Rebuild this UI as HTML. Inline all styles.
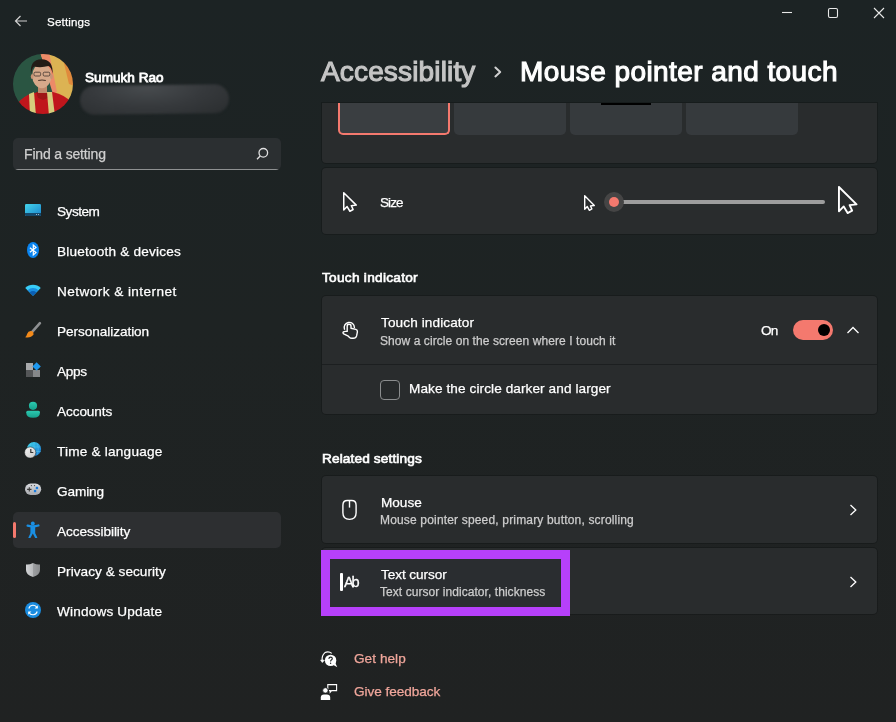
<!DOCTYPE html>
<html><head><meta charset="utf-8"><style>
html,body{margin:0;padding:0;}
body{width:896px;height:722px;overflow:hidden;position:relative;background:linear-gradient(180deg,#1c2324 0%,#1e2323 45%,#202222 100%);font-family:"Liberation Sans",sans-serif;}
.t{position:absolute;white-space:nowrap;line-height:1;will-change:transform;}
svg{will-change:transform;}
</style></head><body>
<svg style="position:absolute;left:0;top:0" width="896" height="40"><g fill="none" stroke="#d0d0d0" stroke-width="1.2"><path d="M15.5 21H27M20.5 16L15.5 21L20.5 26"/></g><g fill="none" stroke="#e8e8e8" stroke-width="1.1"><path d="M782 12.5H792"/><rect x="828.5" y="8.5" width="9" height="9" rx="1.5"/><path d="M874 8L884 18M884 8L874 18"/></g></svg>
<div class="t" style="left:47.12px;top:16.18px;font-size:11.6px;color:#ffffff;letter-spacing:0.159px;-webkit-text-stroke:0.25px #ffffff;">Settings</div>
<svg style="position:absolute;left:13px;top:54px" width="60" height="60" viewBox="0 0 60 60">
<defs><clipPath id="cc"><circle cx="30" cy="30" r="30"/></clipPath>
<filter id="bl"><feGaussianBlur stdDeviation="0.7"/></filter></defs>
<g clip-path="url(#cc)" filter="url(#bl)">
<rect x="-2" y="-2" width="64" height="64" fill="#2b5542"/>
<path d="M27 -2L62 -2L62 62L46 62L41 38Z" fill="#dcb352"/>
<path d="M27 -2L36 -2L44 38L40 40Z" fill="#ec8a68"/>
<path d="M50 5L58 14L62 32L56 30Z" fill="#e08a3c"/>
<path d="M4 50Q10 42 20 39L40 38Q52 41 58 48L62 62L-2 62Z" fill="#c0191f"/>
<path d="M23 38L37 38L35 44L30 46L25 44Z" fill="#9e1418"/>
<path d="M16 40L21 38L23 62L17 62Z" fill="#d6cc7c"/>
<path d="M34 38L39 38L42 62L36 62Z" fill="#d6cc7c"/>
<rect x="25" y="29" width="9" height="10" fill="#c08a6c"/>
<ellipse cx="28.8" cy="21.8" rx="9.6" ry="12.4" fill="#d6a98a"/>
<ellipse cx="19.2" cy="22.5" rx="1.4" ry="2.6" fill="#c89474"/>
<ellipse cx="38.4" cy="22.5" rx="1.4" ry="2.6" fill="#c89474"/>
<path d="M18 20Q16.5 5.5 28.5 5.2Q40.5 5.5 39.5 20Q38.5 13 35.5 12Q28 14 21 12.5Q18.8 14.5 18 20Z" fill="#231a15"/>
<rect x="21" y="18.2" width="6.6" height="3.8" rx="1.2" fill="none" stroke="#3f332e" stroke-width="0.8"/>
<rect x="30.2" y="18.2" width="6.6" height="3.8" rx="1.2" fill="none" stroke="#3f332e" stroke-width="0.8"/>
<path d="M25.2 26.6Q29 25.4 32.8 26.6" stroke="#4a352a" stroke-width="1.1" fill="none"/>
</g></svg>
<div class="t" style="left:85.40px;top:71.19px;font-size:13.6px;color:#ffffff;letter-spacing:0.010px;-webkit-text-stroke:0.8px #ffffff;">Sumukh Rao</div>
<div style="position:absolute;left:80px;top:85px;width:149px;height:29px;border-radius:14.5px;background:radial-gradient(ellipse 70% 120% at 45% 10%,#474b4e,#36393c 55%,#2c2f31 100%);filter:blur(1.2px);transform:rotate(-0.7deg)"></div>
<div style="position:absolute;left:13px;top:138px;width:268px;height:32px;border-radius:5px;background:#2b2f31;overflow:hidden"><div style="position:absolute;left:0;right:0;bottom:0;height:1px;background:#8f9192"></div></div>
<div class="t" style="left:24.12px;top:147.45px;font-size:14px;color:#cfcfcf;letter-spacing:-0.163px;-webkit-text-stroke:0.25px #cfcfcf;">Find a setting</div>
<svg style="position:absolute;left:250px;top:144px" width="24" height="24"><g fill="none" stroke="#e0e0e0" stroke-width="1.3"><circle cx="13.3" cy="8.8" r="4.3"/><path d="M10.2 12L7 15.2"/></g></svg>
<div style="position:absolute;left:13px;top:512px;width:268px;height:36px;border-radius:5px;background:#2d2f31"></div>
<div style="position:absolute;left:13px;top:522px;width:3px;height:16px;border-radius:2px;background:#f4796e"></div>
<div class="t" style="left:57.42px;top:204.99px;font-size:13.6px;color:#ffffff;letter-spacing:-0.481px;-webkit-text-stroke:0.25px #ffffff;">System</div>
<div class="t" style="left:57.42px;top:244.99px;font-size:13.6px;color:#ffffff;letter-spacing:0.196px;-webkit-text-stroke:0.25px #ffffff;">Bluetooth &amp; devices</div>
<div class="t" style="left:57.42px;top:284.99px;font-size:13.6px;color:#ffffff;letter-spacing:0.441px;-webkit-text-stroke:0.25px #ffffff;">Network &amp; internet</div>
<div class="t" style="left:57.42px;top:324.99px;font-size:13.6px;color:#ffffff;letter-spacing:-0.055px;-webkit-text-stroke:0.25px #ffffff;">Personalization</div>
<div class="t" style="left:57.42px;top:364.99px;font-size:13.6px;color:#ffffff;letter-spacing:-0.286px;-webkit-text-stroke:0.25px #ffffff;">Apps</div>
<div class="t" style="left:57.42px;top:404.99px;font-size:13.6px;color:#ffffff;letter-spacing:-0.088px;-webkit-text-stroke:0.25px #ffffff;">Accounts</div>
<div class="t" style="left:57.42px;top:444.99px;font-size:13.6px;color:#ffffff;letter-spacing:0.215px;-webkit-text-stroke:0.25px #ffffff;">Time &amp; language</div>
<div class="t" style="left:57.42px;top:484.99px;font-size:13.6px;color:#ffffff;letter-spacing:-0.110px;-webkit-text-stroke:0.25px #ffffff;">Gaming</div>
<div class="t" style="left:57.42px;top:524.99px;font-size:13.6px;color:#ffffff;letter-spacing:-0.058px;-webkit-text-stroke:0.25px #ffffff;">Accessibility</div>
<div class="t" style="left:57.42px;top:564.99px;font-size:13.6px;color:#ffffff;letter-spacing:0.041px;-webkit-text-stroke:0.25px #ffffff;">Privacy &amp; security</div>
<div class="t" style="left:57.42px;top:604.99px;font-size:13.6px;color:#ffffff;letter-spacing:0.172px;-webkit-text-stroke:0.25px #ffffff;">Windows Update</div>
<svg style="position:absolute;left:0;top:190px" width="60" height="440">
<defs>
<linearGradient id="sys" x1="0" y1="0" x2="1" y2="1"><stop offset="0" stop-color="#44d4ea"/><stop offset="1" stop-color="#1a84cc"/></linearGradient>
<linearGradient id="wifi" x1="0" y1="0" x2="0" y2="1"><stop offset="0" stop-color="#3ac8f4"/><stop offset="1" stop-color="#0b5fb8"/></linearGradient>
<linearGradient id="acc" x1="0" y1="0" x2="0" y2="1"><stop offset="0" stop-color="#2cc9b0"/><stop offset="1" stop-color="#16a08c"/></linearGradient>
<linearGradient id="shield" x1="0" y1="0" x2="1" y2="0"><stop offset="0" stop-color="#d2d4d6"/><stop offset="0.5" stop-color="#b8babc"/><stop offset="0.5" stop-color="#9ea0a2"/><stop offset="1" stop-color="#8a8c8e"/></linearGradient>
<linearGradient id="globe" x1="0" y1="0" x2="1" y2="1"><stop offset="0" stop-color="#40d8ec"/><stop offset="1" stop-color="#1470d0"/></linearGradient>
<linearGradient id="clock" x1="0" y1="0" x2="1" y2="1"><stop offset="0" stop-color="#f4f4f4"/><stop offset="1" stop-color="#c8c8c8"/></linearGradient>
<linearGradient id="pad" x1="0" y1="0" x2="0" y2="1"><stop offset="0" stop-color="#d8dade"/><stop offset="1" stop-color="#a8aaae"/></linearGradient>
</defs>
<!-- System y 204-216 -->
<rect x="25" y="14" width="16" height="12" rx="1.2" fill="url(#sys)"/>
<path d="M25 23H41V24.8Q41 26 39.8 26H26.2Q25 26 25 24.8Z" fill="#16486a"/>
<circle cx="36.5" cy="24.5" r="0.55" fill="#b8c8d8"/><circle cx="38.5" cy="24.5" r="0.55" fill="#b8c8d8"/>
<!-- Bluetooth 242-258 -->
<ellipse cx="33" cy="60" rx="6" ry="8" fill="#0a84f0"/>
<path d="M29.9 57.7L36 62.6L33.3 64.9V55.1L36 57.4L29.9 62.3" fill="none" stroke="#fff" stroke-width="1.2" stroke-linejoin="miter"/>
<!-- Wifi 285-296 -->
<path d="M33 105.8L25.22 98.02A11 11 0 0 1 40.78 98.02Z" fill="#38cdf8"/><path d="M33 105.8L27.56 100.36A7.7 7.7 0 0 1 38.44 100.36Z" fill="#1a8fe2"/><path d="M33 105.8L29.61 102.41A4.8 4.8 0 0 1 36.39 102.41Z" fill="#0b5fb5"/>
<!-- Brush 322-338 -->
<path d="M39.9 133.2L32.4 141.6" stroke="#8e9092" stroke-width="2.6" stroke-linecap="round"/>
<path d="M33 141.4Q28.4 139.8 27.2 143.8Q26.6 146.2 25.2 147.2Q30.8 148.2 33.6 144.4Z" fill="#f38a1a"/>
<!-- Apps 362-377 -->
<rect x="26" y="173" width="7" height="7" fill="#a8aaac"/>
<rect x="26" y="180" width="7" height="7" fill="#545658"/>
<rect x="33" y="180" width="7" height="7" fill="#86888a"/>
<path d="M36.6 172.2L40.8 176.4L36.6 180.6L32.4 176.4Z" fill="#1e98ee"/>
<!-- Accounts 402-418 -->
<circle cx="33" cy="215.8" r="4.1" fill="url(#acc)"/>
<path d="M26.2 222.3Q26.2 220.8 27.7 220.8H38.5Q40 220.8 40 222.3Q40 227.8 33.1 227.8Q26.2 227.8 26.2 222.3Z" fill="url(#acc)"/>
<!-- Time 442-458 -->
<circle cx="34" cy="259" r="7.1" fill="url(#globe)"/>
<path d="M27.5 257H40.5M27.5 261.5H40.8M34 252V266M30.5 253.5Q29 259 30.5 264.5M37.5 253.5Q39 259 37.5 264.5" stroke="#5fd0f0" stroke-width="0.6" fill="none" opacity="0.7"/>
<circle cx="30.2" cy="262.5" r="5.6" fill="url(#clock)" stroke="#1e2223" stroke-width="0.5"/>
<path d="M30.8 258.9V262.5H33.3" fill="none" stroke="#333" stroke-width="1.2"/>
<!-- Gaming 484-495 -->
<rect x="25" y="293.6" width="16.2" height="11.4" rx="5.7" fill="url(#pad)"/>
<circle cx="31.4" cy="295.6" r="0.65" fill="#444"/><circle cx="34.5" cy="295.6" r="0.65" fill="#444"/>
<path d="M27.1 299.4H31.5M29.3 297.2V301.6" stroke="#3a3a3a" stroke-width="1.1"/>
<rect x="35.8" y="296.8" width="2.3" height="2.3" fill="#1a7de0"/>
<rect x="33.9" y="299.9" width="2.3" height="2.3" fill="#1a7de0"/>
<!-- Accessibility 522-538 -->
<circle cx="32.8" cy="333.4" r="1.95" fill="#1a8fe3"/>
<path d="M27.6 335.6Q33 337.2 38.4 335.5" fill="none" stroke="#1a8fe3" stroke-width="2.3" stroke-linecap="round"/>
<path d="M30.4 336.4H35.2V343.2L37.3 347.4Q37.3 348 36.6 348H35.6Q35.1 348 34.9 347.4L32.8 343.6L30.7 347.4Q30.5 348 30 348H29Q28.3 348 28.4 347.4L30.4 343.2Z" fill="#1a8fe3"/>
<!-- Privacy 563-577 -->
<path d="M33 373Q29 375 26 374.5V380Q26 385 33 387Q40 385 40 380V374.5Q37 375 33 373Z" fill="url(#shield)"/>
<!-- Update 602-618 -->
<circle cx="33" cy="420" r="8" fill="#1a8ce0"/>
<path d="M28.8 418.5A4.5 4.5 0 0 1 37 417.5M37.2 421.5A4.5 4.5 0 0 1 29 422.5" fill="none" stroke="#fff" stroke-width="1.1"/>
<path d="M37.8 415.2V418.5H34.6Z M28.2 424.8V421.5H31.4Z" fill="#fff"/>
</svg>
<div style="position:absolute;left:322px;top:103px;width:555px;height:60px;border-radius:0 0 4px 4px;background:#292c2d;box-shadow:0 0 0 1px rgba(0,0,0,0.2)"></div>
<div style="position:absolute;left:338px;top:103px;width:108px;height:30px;border-radius:0 0 5px 5px;background:#3a3e41;border:2px solid #f4796e;border-top:none"></div>
<div style="position:absolute;left:454px;top:103px;width:112px;height:31.6px;border-radius:0 0 5px 5px;background:#363a3d"></div>
<div style="position:absolute;left:570px;top:103px;width:112px;height:31.6px;border-radius:0 0 5px 5px;background:#363a3d"></div>
<div style="position:absolute;left:686px;top:103px;width:112px;height:31.6px;border-radius:0 0 5px 5px;background:#363a3d"></div>
<div style="position:absolute;left:601px;top:103px;width:50px;height:1.5px;background:#000"></div>
<div class="t" style="left:320.85px;top:58.30px;font-size:28px;color:#c5c5c5;letter-spacing:0.153px;-webkit-text-stroke:1.1px #c5c5c5;">Accessibility</div>
<svg style="position:absolute;left:490px;top:64px" width="16" height="16"><path d="M5.4 3.5L10.2 7.95L5.4 12.4" fill="none" stroke="#d0d0d0" stroke-width="2" stroke-linecap="round" stroke-linejoin="round"/></svg>
<div class="t" style="left:520.35px;top:58.30px;font-size:28px;color:#ffffff;letter-spacing:0.428px;-webkit-text-stroke:1.1px #ffffff;">Mouse pointer and touch</div>
<div style="position:absolute;left:322px;top:168px;width:555px;height:66px;border-radius:4px;background:#292c2d;box-shadow:0 0 0 1px rgba(0,0,0,0.2)"></div>
<svg style="position:absolute;left:343px;top:192px;overflow:visible" width="14" height="20"><path d="M0.75 0.75 L0.75 18.01 L4.13 14.56 L6.90 19.25 L10.11 17.52 L8.33 13.66 L13.25 13.11Z" fill="none" stroke="#fff" stroke-width="1.5" stroke-linejoin="round"/></svg>
<div class="t" style="left:380.32px;top:195.76px;font-size:13.4px;color:#ffffff;letter-spacing:-0.838px;-webkit-text-stroke:0.25px #ffffff;">Size</div>
<svg style="position:absolute;left:584px;top:195px;overflow:visible" width="11" height="16"><path d="M0.70 0.70 L0.70 14.32 L3.30 11.60 L5.42 15.30 L7.89 13.94 L6.52 10.89 L10.30 10.45Z" fill="none" stroke="#fff" stroke-width="1.4" stroke-linejoin="round"/></svg>
<svg style="position:absolute;left:838px;top:186px;overflow:visible" width="19.5" height="28"><path d="M0.95 0.95 L0.95 25.30 L5.71 20.43 L9.61 27.05 L14.13 24.62 L11.63 19.16 L18.55 18.38Z" fill="none" stroke="#fff" stroke-width="1.9" stroke-linejoin="round"/></svg>
<div style="position:absolute;left:614px;top:200px;width:211px;height:4px;border-radius:2px;background:#9d9d9d"></div>
<div style="position:absolute;left:603.8px;top:191.7px;width:20px;height:20px;border-radius:50%;background:#454545"></div>
<div style="position:absolute;left:608.8px;top:196.7px;width:10px;height:10px;border-radius:50%;background:#f4796e"></div>
<div class="t" style="left:322.12px;top:271.20px;font-size:13.7px;color:#ffffff;letter-spacing:0.258px;-webkit-text-stroke:0.65px #ffffff;">Touch indicator</div>
<div style="position:absolute;left:322px;top:296px;width:555px;height:118px;border-radius:4px;background:#292c2d;box-shadow:0 0 0 1px rgba(0,0,0,0.2)"></div>
<div style="position:absolute;left:322px;top:364px;width:555px;height:1px;background:#1c1f20"></div>
<svg style="position:absolute;left:340px;top:319px" width="20" height="22" viewBox="0 0 20 22"><g fill="none" stroke="#fff" stroke-width="1.4" stroke-linejoin="round" stroke-linecap="round">
<path d="M4.5 10.2A5.1 5.1 0 1 1 14.4 8.4"/>
<path d="M7.2 12.4V6.9Q7.2 5.3 9.1 5.3Q11 5.3 11 6.9V9.3L15.8 10.4Q17.5 10.9 17.4 12.8L16.6 16.9Q16 19.3 13.2 19.3H11.8Q10.4 19.3 9.3 18.2L7.8 16.8L3.7 14.8Q2.5 14 3.3 13Q4 12.3 5.6 12.4Z"/>
</g></svg>
<div class="t" style="left:380.82px;top:316.49px;font-size:13.6px;color:#ffffff;letter-spacing:0.106px;-webkit-text-stroke:0.25px #ffffff;">Touch indicator</div>
<div class="t" style="left:380.12px;top:334.64px;font-size:12px;color:#cdcdcd;letter-spacing:0.072px;-webkit-text-stroke:0.25px #cdcdcd;">Show a circle on the screen where I touch it</div>
<div class="t" style="left:761.42px;top:324.29px;font-size:13.6px;color:#ffffff;letter-spacing:-0.706px;-webkit-text-stroke:0.25px #ffffff;">On</div>
<div style="position:absolute;left:793px;top:320px;width:40px;height:20px;border-radius:10px;background:#f4796e"></div>
<div style="position:absolute;left:818px;top:324px;width:12px;height:12px;border-radius:50%;background:#000"></div>
<svg style="position:absolute;left:845px;top:322px" width="16" height="16"><path d="M2.5 11L8 5.5L13.5 11" fill="none" stroke="#fff" stroke-width="1.3"/></svg>
<div style="position:absolute;left:380px;top:380px;width:18px;height:18px;border-radius:4px;border:1px solid #8a8c8e;background:#26292b"></div>
<div class="t" style="left:409.12px;top:382.49px;font-size:13.6px;color:#ffffff;letter-spacing:0.091px;-webkit-text-stroke:0.25px #ffffff;">Make the circle darker and larger</div>
<div class="t" style="left:321.93px;top:451.50px;font-size:13.7px;color:#ffffff;letter-spacing:0.108px;-webkit-text-stroke:0.65px #ffffff;">Related settings</div>
<div style="position:absolute;left:322px;top:476px;width:555px;height:67px;border-radius:4px;background:#292c2d;box-shadow:0 0 0 1px rgba(0,0,0,0.2)"></div>
<svg style="position:absolute;left:338px;top:496px" width="22" height="28"><g fill="none" stroke="#fff" stroke-width="1.4"><path d="M4.9 9.2Q4.9 4.5 9.3 4.5H13.7Q18.1 4.5 18.1 9.2V16.8Q18.1 23.4 11.5 23.4Q4.9 23.4 4.9 16.8Z"/><path d="M11.5 4.5V11.6"/></g></svg>
<div class="t" style="left:380.62px;top:495.69px;font-size:13.6px;color:#ffffff;letter-spacing:-0.012px;-webkit-text-stroke:0.25px #ffffff;">Mouse</div>
<div class="t" style="left:380.32px;top:513.84px;font-size:12px;color:#cdcdcd;letter-spacing:0.170px;-webkit-text-stroke:0.25px #cdcdcd;">Mouse pointer speed, primary button, scrolling</div>
<svg style="position:absolute;left:845px;top:502px" width="16" height="16"><path d="M5.5 3L10.8 8L5.5 13" fill="none" stroke="#fff" stroke-width="1.3"/></svg>
<div style="position:absolute;left:322px;top:548px;width:555px;height:66px;border-radius:4px;background:#292c2d;box-shadow:0 0 0 1px rgba(0,0,0,0.2)"></div>
<div style="position:absolute;left:321px;top:550px;width:231px;height:48px;border:9px solid #b640fa;background:#2a2d30"></div>
<div style="position:absolute;left:340px;top:573px;width:2.6px;height:18px;border-radius:1px;background:#fff"></div>
<div class="t" style="left:343.65px;top:574.64px;font-size:14.6px;color:#ffffff;letter-spacing:-2.185px;-webkit-text-stroke:0.3px #ffffff;">Ab</div>
<div class="t" style="left:380.93px;top:567.79px;font-size:13.6px;color:#ffffff;letter-spacing:-0.075px;-webkit-text-stroke:0.25px #ffffff;">Text cursor</div>
<div class="t" style="left:380.32px;top:585.84px;font-size:12px;color:#cdcdcd;letter-spacing:0.060px;-webkit-text-stroke:0.25px #cdcdcd;">Text cursor indicator, thickness</div>
<svg style="position:absolute;left:845px;top:574px" width="16" height="16"><path d="M5.5 3L10.8 8L5.5 13" fill="none" stroke="#fff" stroke-width="1.3"/></svg>
<svg style="position:absolute;left:319px;top:649px" width="20" height="20" viewBox="0 0 20 20">
<path d="M3.2 11.6Q2.5 6.5 6 3.6Q9.5 1.6 12.8 4.4" fill="none" stroke="#fff" stroke-width="1.2"/>
<path d="M1.6 11L3.3 13.6L5.4 11.2Z" fill="#fff" stroke="#fff" stroke-width="0.6" stroke-linejoin="round"/>
<circle cx="11.6" cy="11.4" r="5.7" fill="#fff"/>
<path d="M13.5 15.5L18.3 18.2L16.2 13.8Z" fill="#fff"/>
<path d="M9.9 9.9Q9.9 8.1 11.6 8.1Q13.3 8.1 13.3 9.6Q13.3 10.6 12.3 11.1Q11.6 11.5 11.6 12.6" fill="none" stroke="#1e2223" stroke-width="1.1"/>
<circle cx="11.6" cy="14.3" r="0.7" fill="#1e2223"/>
</svg>
<div class="t" style="left:354.12px;top:652.49px;font-size:13.6px;color:#f0a69b;letter-spacing:0.049px;-webkit-text-stroke:0.25px #f0a69b;">Get help</div>
<svg style="position:absolute;left:319px;top:682px" width="20" height="20" viewBox="0 0 20 20">
<path d="M8.8 7.2V2.6H17.6V8.6H12.6L11.2 10.2V8.6H10" fill="none" stroke="#fff" stroke-width="1.1"/>
<circle cx="6.4" cy="8.4" r="2.7" stroke="#1e2223" stroke-width="0.8" fill="#fff"/>
<path d="M1.8 17.9V15.6Q1.8 12.4 5 12.4H7.8Q11.2 12.4 11.2 15.6V17.9Z" fill="#fff"/>
</svg>
<div class="t" style="left:354.12px;top:685.09px;font-size:13.6px;color:#f0a69b;letter-spacing:-0.041px;-webkit-text-stroke:0.25px #f0a69b;">Give feedback</div>
</body></html>
